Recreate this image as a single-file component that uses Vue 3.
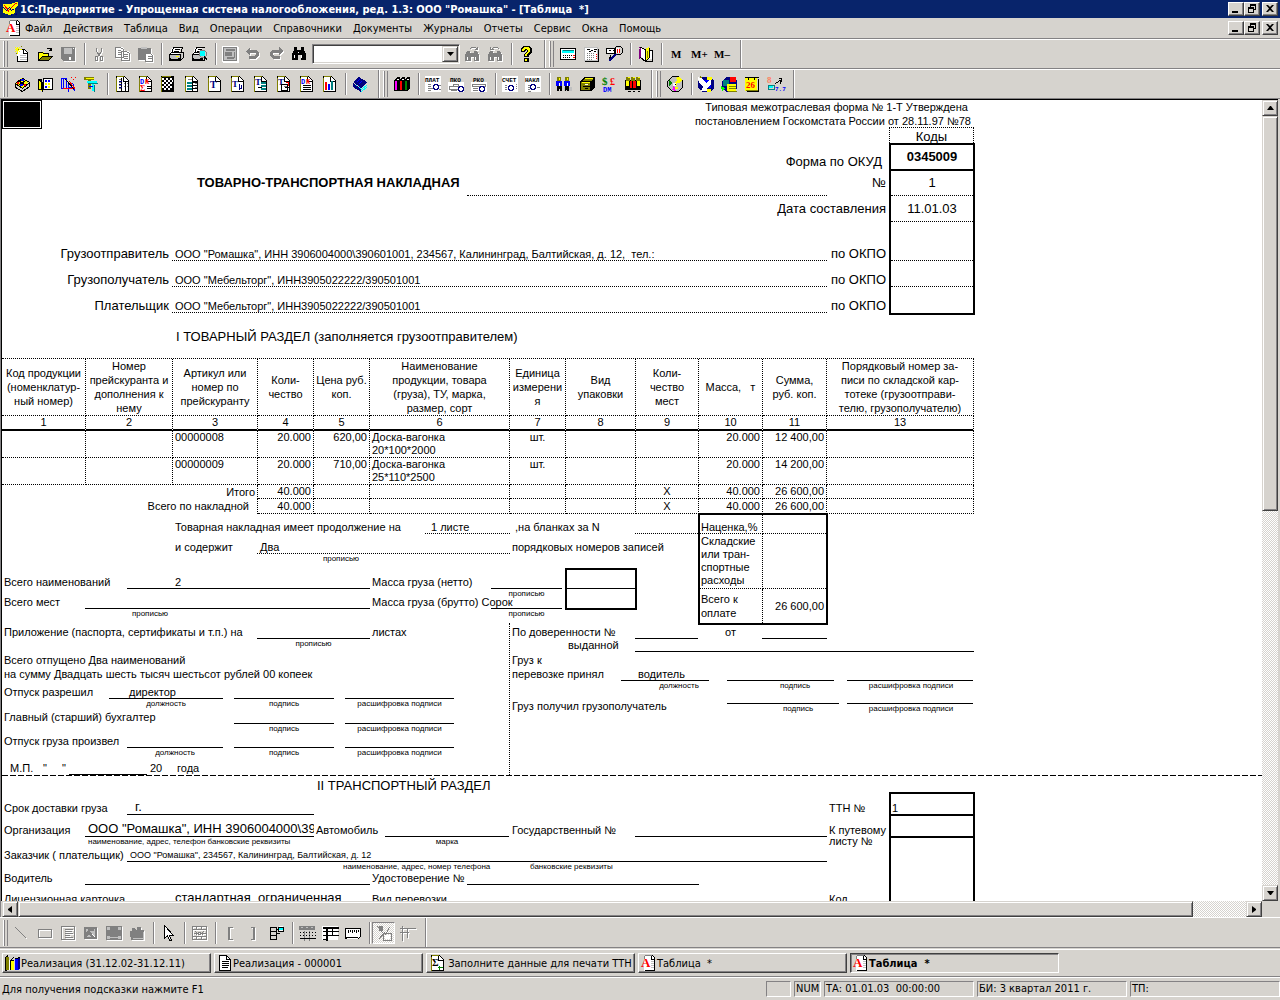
<script setup>
import { h } from 'vue'

const palette = {
  k: '#000000', w: '#ffffff', g: '#808080', l: '#c0c0c0', y: '#ffff00', o: '#808000',
  b: '#000080', B: '#0000ff', c: '#00ffff', t: '#008080', r: '#ff0000', R: '#800000',
  m: '#ff00ff', G: '#008000', L: '#00ff00', p: '#800080', n: '#ff8060',
}

const page = 'fw M2 1h8l4 4v11H2z|sk M2 0h8l4 4v11H2zM9 0v5h5|so M2 1v14M2 0h7'

/* Layers: f = fill, s = 1px stroke, t = short label (x y size text) */
const icons = {
  app: 'fy M1 3h8l5-2h2v4l-3 2v5l-5 2-7-2z|sr M2 4l4 5 3-3 4-4M4 9l3 1M12 3l3-2|sb M1 6l3 3 3-3 2 3 3-2M9 14v-2M13 14l1-2',
  sheet: 'fw M3 1h8l3 3v12H3V1z|sg M3 0h8M3 0v3|sk M11 0l2 2v13H3M10 0v4h3|sl M9 6h3M9 8h3M9 10h3M9 12h3|tr 0 12 13 A',
  fresh: 'fw M3 4h7l3 3v9H3z|sk M7 3h3l3 3v9H3V9M9 3v4h4|sl M5 9h6M5 11h7M5 13h7|sy M0 3h7M3 0v7M1 1l5 5M5 1l-5 5|so M3 3h1M1 7h1M6 0h1',
  open: 'fy M1 6h5l1 1h5v3H6l-4 5H1z|fo M2 15l4-5h10l-4 5z|sk M1 14V6h4l1 1h5v3M1 14l4-4h10l-4 4zM9 3l1-1h3l1 2M14 1v3h-3',
  save: 'fg M1 1h14v14H3l-2-2z|fl M4 2h8v6H4z|fw M9 11h2v3H9zM13 2h1v1h-1z',
  cut: 'sg M5 1v4l4 5M10 1v4L6 10M4 10h2v4H4zM9 10h2v4H9z',
  copy: 'fw M1 1h8v10H1zM7 5h8v9H7z|sg M1 1h5l3 2v8H1zM7 5h5l3 2v7H7zM3 4h3M3 6h4M3 8h3M9 8h4M9 10h4M9 12h4',
  paste: 'fg M1 2h13v12H1z|fl M4 1h6v2H4z|fw M8 7h6l2 2v7H8z|sg M8 7h5l2 2v6H8zM10 10h4M10 12h4',
  print: 'fw M4 2h9l-2 6H2z|fl M1 8h13v5H1z|fk M1 12h12v3H1z|sk M5 1h9l-2 6M5 1L3 7M6 3h5M5 5h5M1 8l2-2h12v5l-3 3H1zM1 8h11v6|sy M7 10h3|fl M3 12h7v1H3z',
  preview: 'fw M4 2h7l-1 6H2z|fl M1 8h11v5H1z|fk M1 12h11v3H1z|sk M5 1h8M5 1L3 7M6 3h4M5 5h4M1 8l2-2h10v8H1zM1 8h9|fc M9 5h5v5H9z|sg M9 4h4l2 2v3l-2 2h-3L8 9V5z|sk M13 11l3 3M13 10l3 3|fl M3 12h6v1H3z',
  area: 'fl M0 0h16v16H0z|sw M0 0h15v15H0z|sg M1 1h13v13H1z|fg M4 3h9v2H4zM3 6h7v4H3zM5 11h7v2H5zM12 6h1v6h-1z',
  undo: 'fg M1 5l4-4v3h6l3 2v4l-4 3H4v-3h5l2-1V7H5v3z',
  redo: 'fg M15 5l-4-4v3H5L2 6v4l4 3h6v-3H7L5 9V7h6v3z',
  find: 'fk M3 1h3v3h4V1h3v3l2 4v6h-5V9H7v5H1V8l2-4z|sw M3 8v3M10 8v3M7 5v1|sk M4 2v1',
  findNext: 'fg M3 5h3v2h4V5h3l2 4v6h-5v-4H7v4H1V9z|sg M5 3l2-2h4l2 2M13 0v3h-3|sw M3 10v3M11 10v3',
  findPrev: 'fg M3 5h3v2h4V5h3l2 4v6h-5v-4H7v4H1V9z|sg M4 3l2-2h4l2 2M3 0v3h3|sw M3 10v3M11 10v3',
  help: 'fk M3 2l2-2h6l3 3v3l-3 3v2H6V8l3-3-1-1-1 2H3zM6 12h5v4H6z|fy M4 3l2-2h4l2 2v2l-3 3v2H7V8l3-3-1-2H7L6 5H4zM7 13h2v2H7z',
  calcBig: 'fw M0 2h16v12H0z|sk M0 2h15v11H0z|fc M2 4h12v3H2z|st M2 4h11|sk M2 9h1M4 9h1M6 9h1M8 9h1M10 9h1M2 11h1M4 11h1M6 11h1M8 11h1|sr M12 9h2M12 11h2',
  calcPage: 'fw M1 1h14v14H1z|sl M1 1h13v13H1z|sk M3 3h3M7 4h2M10 3h3M5 5h2M10 5h2M1 15h14M15 2v13|sg M3 7h1M5 7h1M7 7h1M9 7h1M3 9h1M5 9h1M7 9h1M9 9h1M3 11h1M5 11h1M7 11h1M9 11h1M3 13h1M5 13h1M7 13h1|sr M12 8h1M12 10h1M12 12h1',
  inspect: 'fw M0 2h13v5H0z|sk M0 2h9v5H0zM2 4h2M6 4h1M10 0h4l2 2v4l-2 2h-4L8 6V2z|sr M11 2v4M13 2v4|fb M8 8h3l-6 7H3v-2z|sk M4 9l-1 4',
  book: 'fw M4 2l4 1v11l-4-3z|fy M8 3l4-2v10l-4 4z|fw M12 4h3v9h-3z|sp M1 1h2v10l5 4|sk M3 1l5 2v11M12 1v10l-4 4M3 11l5 4h7V4h-3|sp M2 2v10|so M10 4v7',
  M: 'tk 3 12 11 M', Mp: 'tk 0 12 11 M+', Mm: 'tk 0 12 11 M–',
  cube: 'fy M1 7l7-5 7 4-7 6z|sk M1 7l7-5 7 4-7 6zM1 7v4l7 4 7-5V6M4 4l7 5M11 4L4 9|fr M3 6h2v2H3zM10 8h2v2h-2z|fB M7 3h3v2H7zM6 8h3v2H6z',
  accounts: 'fy M1 4l4 2v9l-4-3z|sk M1 3h3v10H1zM1 3l4 3v9|fw M6 2h10v12H6z|sk M6 2h9v11H6z|fB M8 4h2v2H8zM11 4h2v2h-2zM8 10h2v2H8z|fy M8 7h2v2H8zM11 7h2v2h-2zM11 10h2v2h-2z',
  wizard: 'sB M1 2h5v10H1zM3 2v10M8 7v8M8 7h4l2 3M8 11h4l3 4|sr M9 5l6 8M2 12h12M12 3h1M14 1h1M10 1h1|sk M5 3l9 10',
  tee: 'fo M1 1h10v3H8v9H5V4H1z|sy M2 2h8|fc M4 5h10v2h-3v8H9V7H4z|st M4 7h10M11 8v7|sB M5 10h4',
  docJournal: page + '|sg M4 3h3M4 6h3M4 9h3M4 12h3M9 7h1M9 10h1M12 7h1M12 10h1|sk M7 1v14M11 5v10|sb M4 5h3M4 8h3M4 11h3',
  docSum: page + '|tB 3 8 7 D|tr 8 8 7 K|tr 3 15 8 Σ|sk M9 10h4M9 12h4',
  chess: 'fk M1 0h13v16H1z|fw M2 2h2v2H2zM6 2h2v2H6zM10 2h2v2h-2zM4 4h2v2H4zM8 4h2v2H8zM12 4h1v2h-1zM2 6h2v2H2zM6 6h2v2H6zM10 6h2v2h-2zM4 8h2v2H4zM8 8h2v2H8zM2 10h2v2H2zM6 10h2v2H6zM10 10h2v2h-2zM4 12h2v2H4zM8 12h2v2H8z|so M1 0h9M1 0v15',
  docTree: page + '|ft M4 6h5v2H4zM4 9h5v2H4zM4 12h5v2H4z|sk M9 2v13M9 6h5M9 9h5M9 12h5|sg M4 3h4M11 7h2M11 11h2',
  docT: page + '|tb 4 12 10 T',
  docT2: page + '|tb 3 11 9 T|sb M10 7v6M9 12h3M12 8v4',
  docT3: page + '|tb 3 9 9 T|ft M9 6h5v2H9zM9 9h5v2H9zM9 12h5v2H9z|sk M5 11h4',
  docT4: page + '|tb 3 9 9 T|sk M6 8h6v6H6zM9 11h4|sr M10 6h3v3|sg M8 10h3',
  docLines: page + '|tB 3 8 7 D|tr 8 8 7 K|sk M4 9h8M4 11h8M4 13h8',
  chart: page + '|fr M4 6h2v8H4z|fB M7 8h2v6H7z|ft M10 5h2v9h-2z',
  blueBook: 'fb M1 6l6-5 8 5-6 6z|sc M2 8l7 5 6-5M2 10l7 5 6-5|fb M1 7l8 6v3l-8-5z|sB M4 6l3-3M9 5l-3 3',
  library: 'fk M0 4l3-3h3l-1 14H0z|fm M1 5h2v9H1z|fk M5 4l3-3h3v14H5z|fr M6 5h2v9H6z|fk M10 4l3-3h3v11l-3 3h-3z|fG M11 5h2v9h-2z|sw M2 3h2M7 3h2M12 3h2',
  plat: 'fw M0 0h16v16H0z|tk 0 6 6 ПЛАТ|sg M2 8h3M2 10h3M2 12h5M2 14h3M13 9h2M13 13h2|sb M9 8h3v1h1v3h-1v1H9v-1H8V9h1z',
  pko: 'fw M0 6h16v10H0z|tk 2 6 6 ПКО|sg M5 8h5v2H5zM1 10h9v3H1zM2 14h6|sb M11 10h3v1h1v3h-1v1h-3v-1h-1v-3h1z',
  rko: 'fw M0 6h16v10H0z|tk 2 6 6 РКО|sg M1 8h13v2H1zM1 12h5M1 14h5|sb M9 10h3v1h1v3h-1v1H9v-1H8v-3h1z',
  bill: 'fw M0 0h16v16H0z|tk 0 6 6 СЧЕТ|sg M2 9h2M2 11h2M2 13h2M13 8h1M13 10h1M13 12h1|sb M7 9h3v1h1v3h-1v1H7v-1H6v-3h1z',
  nakl: 'fw M0 0h16v16H0z|tk 0 6 6 НАКЛ|sg M2 9h2M2 11h2M2 13h2M11 11h3M2 15h3|sb M6 8h3v1h1v3H9v1H6v-1H5V9h1z',
  people: 'fl M8 11h8v4H8z|fo M1 1h4v4H1zM9 1h4v4H9z|fB M0 5h6v5H0zM8 5h6v5H8z|fk M1 10h5v5H4v-3l-1 3H1zM9 10h4v5h-2l-1-3v3H9z|sw M3 6v3M11 6v3|sy M3 1v2M11 1v2',
  cabinet: 'fk M1 5l5-4h10v10l-4 4H1z|fo M2 6h9v8H2zM5 3h9l-2 2H4z|sy M2 6h8M5 2h8|sw M5 8h3|sk M3 10h8M5 12h3',
  currency: 'tG 0 9 11 $|tr 8 9 10 £|tB 1 16 7 DM',
  crowd: 'fk M0 4h16v10H0z|fo M1 1h4v4H1zM6 1h4v4H6zM11 1h4v4h-4z|fy M1 5h3v5H1zM12 5h3v5h-3z|fr M5 5h2v7H5zM8 5h3v7H8z|sk M2 15h3M7 15h2M12 15h2M4 6v6M7 5v8M11 5v8|sy M2 1h2M7 1h2M12 1h2',
  disc: 'fk M5 0h6l5 5v6l-5 5H5l-5-5V5z|fl M5 1h6l4 4v6l-4 4H5l-4-4V5z|fG M2 4l4 3-4 3z|fm M5 14l2-5 2 6z|fy M8 2l4-1 3 3-3 3h-2v3H8V6l2-2zM8 11h3v2H8z|fw M6 7h3v3H6z|sk M7 8h1',
  globe: 'fb M4 1h8l4 4v7l-4 4H4l-4-4V5z|fB M5 4h8v8H5z|fw M0 1l5 2 3 4 5-5v6l-5 5 3 2H3l2-4-4-4z|fy M9 1h5v3H9zM9 13h4v3H9z|fo M2 0l3 2H2z',
  globeDoc: 'fb M5 1h7l4 4v7l-4 4H5l-4-4V5z|ft M2 4h6v6H2z|fr M9 1h6v5H9z|fy M6 8h9v7H6z|so M7 10h7M7 12h7M6 15h9|fL M0 10l4 2-3 3z',
  diary: 'fy M1 1h12v14H1z|sk M0 1h14M14 2v13H2M4 0v3M10 0v3|tr 2 12 9 26|so M1 14h12',
  convert: 'tn 0 7 9 8|sk M8 7l6-4M11 2h3v3M13 3v4|st M1 9h6v4H1z|fc M2 10h4v2H2z|tB 8 15 6 7.7',
  line: 'sg M1 2l11 11', rect: 'sg M1 4h13v8H1z',
  textBox: 'sg M1 1h13v13H1zM4 4h8M4 6h7M4 8h8M4 10h5M4 12h8',
  picture: 'fg M1 2h13v12H1z|fl M3 4h9v8H3z|fg M5 3h6v3H5zM2 8l4-3 7 8H9L6 9l-3 4z|sw M9 9l3 3',
  ole: 'fg M0 1h16v14H0z|fl M1 2h3v3H1zM12 2h3v3h-3zM1 11h3v3H1zM12 11h3v3h-3z|fg M3 7l5-6 5 6-3 5H6z|sl M2 12h12',
  frame: 'fg M1 6h2V3h3l1 2h1V2h4v3h3v10H2v-3H1z|sl M3 13h11M14 6v8|sg M7 7h2',
  cursor: 'fw M4 1l9 9h-4l2 4-2 1-2-4-3 3z|sk M4 0v13l3-3 2 5h2l-2-5h4z',
  merge: 'sg M1 1h14v13H1zM1 4h14M1 11h14M5 1v3M10 1v3M5 11v3M10 11v3M2 8h4M10 8h4M4 6l2 2-2 2M12 6l-2 2 2 2|sg M7 7h2v2H7z',
  brOpen: 'sg M10 2H6v12h4M7 2v12', brClose: 'sg M5 2h4v12H5M8 2v12',
  section: 'sk M2 2h6v4H2zM2 6h6v4H2zM2 10h6v4H2zM8 4h4M8 8h3|fw M11 1h4v6h-4z|sk M10 2h5v4h-5z|fc M11 3h4v2h-4z',
  header: 'fg M0 1h16v4H0z|sg M5 5v10M10 5v10|fl M2 2h2v1H2zM7 2h2v1H7zM12 2h2v1h-2z|sk M0 7h1M3 7h1M6 7h1M9 7h1M12 7h1M15 7h1M0 10h1M3 10h1M6 10h1M9 10h1M12 10h1M15 10h1M0 13h16',
  grid: 'fw M0 1h16v14H0z|sk M0 2h16M0 6h16M0 10h16M0 14h5M5 1v14M10 2v8M0 3h16M4 1v14',
  ruler: 'fw M0 3h16v8l-2 3H1l-1-3z|sk M0 3h15v8l-2 2-1-1H2l-2 1zM3 4v3M5 4v2M7 4v3M9 4v2M11 4v3M13 4v2',
  edit: 'sg M1 1l5 6 3 2 4-7M2 14l6-7M4 2l3 4|fg M3 1h4v5H3z|sg M7 8h8v7H7z|fw M9 10h5v4H9z',
  lines: 'sg M0 3h16M3 0v15M0 7h9M8 3v9',
  journal: 'fk M0 2l3-2v15l-2 1H0z|fo M1 2h3v13H1z|fk M5 5h4v10H5z|fy M6 6h3v9H6z|fB M10 3h4v12h-4z|fb M13 2h2v12h-2z|sk M9 3h3l3-2M5 5l3-3|sw M4 4v10',
  paper: 'fw M2 1h8l4 4v11H2z|sk M2 0h7l4 4v11H2zM9 0v4h4M4 6h7M4 8h7M4 10h7M4 12h6',
  report: page + '|tk 3 11 10 Σ|sG M10 10v4M8 12h5',
}

const Icon = (props) =>
  h(
    'svg',
    { class: 'icon', width: 16, height: 16, viewBox: '0 0 16 16', 'aria-hidden': 'true' },
    icons[props.name].split('|').map((layer) => {
      const color = palette[layer[1]]
      const body = layer.slice(3)
      if (layer[0] === 't') {
        const [x, y, size, label] = body.split(' ')
        return h('text', { x, y, fill: color, 'font-size': size, class: +size < 8 ? 'tiny' : 'serif' }, label)
      }
      return layer[0] === 'f'
        ? h('path', { d: body, fill: color })
        : h('path', { d: body, fill: 'none', stroke: color, transform: 'translate(.5 .5)' })
    }),
  )
Icon.props = ['name']

/* Lines of the form: [height, [left edge, right edge, text, classes], ...] */
const Lines = (props) =>
  props.rows.map(([height, ...cells]) => {
    let edge = props.from
    return h(
      'div',
      { class: 'line', style: { height: height + 'px' } },
      cells.map(([left, right, text, cls]) => {
        const style = { marginLeft: left - edge + 'px', width: right - left + 'px' }
        edge = right
        return h('div', { class: ['cell', cls], style }, text)
      }),
    )
  })
Lines.props = ['rows', 'from']

const menu = ['Файл', 'Действия', 'Таблица', 'Вид', 'Операции', 'Справочники', 'Документы', 'Журналы', 'Отчеты', 'Сервис', 'Окна', 'Помощь']

/* '-' is a separator, '*' a drop-down; a leading '!' marks a disabled tool */
const bandsTop = [
  ['fresh', 'open', '!save', '-', '!cut', '!copy', '!paste', '-', 'print', 'preview', '-', '!area', '!undo', '!redo', 'find', '*', '!findNext', '!findPrev', '-', 'help'],
  ['calcBig', 'calcPage', 'inspect', '-', 'book', '-', 'M', 'Mp', 'Mm'],
]
const bandsMiddle = [
  ['cube', 'accounts', 'wizard', 'tee', '-', 'docJournal', 'docSum', 'chess', 'docTree', 'docT', 'docT2', 'docT3', 'docT4', 'docLines', 'chart', '-', 'blueBook'],
  ['library', '-', 'plat', 'pko', 'rko', '-', 'bill', 'nakl', '-', 'people', 'cabinet', 'currency', 'crowd'],
  ['disc', '-', 'globe', 'globeDoc', 'diary', 'convert'],
]
const bandsBottom = [
  ['!line', '!rect', '!textBox', '!picture', '!ole', '!frame', '-', 'cursor', '-', '!merge', '-', '!brOpen', '!brClose', 'section', '-', 'header', 'grid', 'ruler', '-', '+edit', '!lines'],
]
const toolName = (tool) => tool.replace(/^[!+]/, '')

const parties = [
  [15],
  [26, [702, 882, 'Форма по ОКУД', 'big right']],
  [27, [197, 456, 'ТОВАРНО-ТРАНСПОРТНАЯ НАКЛАДНАЯ', 'big bold up'], [467, 827, '', 'dots'], [840, 886, '№', 'big right up']],
  [26, [702, 886, 'Дата составления', 'big right up']],
  [39, [2, 169, 'Грузоотправитель', 'big right'], [172, 827, 'ООО "Ромашка", ИНН 3906004000\\390601001, 234567, Калининград, Балтийская, д. 12,  тел.:', 'dots pad'], [827, 886, 'по ОКПО', 'big right']],
  [26, [2, 169, 'Грузополучатель', 'big right'], [172, 827, 'ООО "Мебельторг", ИНН3905022222/390501001', 'dots pad'], [827, 886, 'по ОКПО', 'big right']],
  [26, [2, 169, 'Плательщик', 'big right'], [172, 827, 'ООО "Мебельторг", ИНН3905022222/390501001', 'dots pad'], [827, 886, 'по ОКПО', 'big right']],
]

const columns = [84, 87, 85, 56, 56, 140, 56, 70, 63, 64, 64, 147]
const heads = [
  'Код продукции\n(номенклатур-\nный номер)', 'Номер\nпрейскуранта и\nдополнения к\nнему', 'Артикул или\nномер по\nпрейскуранту',
  'Коли-\nчество', 'Цена руб.\nкоп.', 'Наименование\nпродукции, товара\n(груза), ТУ, марка,\nразмер, сорт', 'Единица\nизмерени\nя',
  'Вид\nупаковки', 'Коли-\nчество\nмест', 'Масса,   т', 'Сумма,\nруб. коп.',
  'Порядковый номер за-\nписи по складской кар-\nтотеке (грузоотправи-\nтелю, грузополучателю)',
]
const numbers = [1, 2, 3, 4, 5, 6, 7, 8, 9, 10, 11, 13]
const goods = [
  ['', '', '00000008', '20.000', '620,00', 'Доска-вагонка\n20*100*2000', 'шт.', '', '', '20.000', '12 400,00', ''],
  ['', '', '00000009', '20.000', '710,00', 'Доска-вагонка\n25*110*2500', 'шт.', '', '', '20.000', '14 200,00', ''],
]
const align = ['', '', 'left', 'right', 'right', 'left', '', '', '', 'right', 'right', '']
const totals = [
  ['Итого', '40.000', '', '', '', '', 'X', '40.000', '26 600,00', ''],
  ['Всего по накладной', '40.000', '', '', '', '', 'X', '40.000', '26 600,00', ''],
]
const totalAlign = ['right', 'right', '', '', '', '', '', 'right', 'right', '']

const continuation = [
  [20, [175, 425, 'Товарная накладная имеет продолжение на'], [425, 510, '1 листе', 'dots pad2'], [515, 635, ',на бланках за N'], [635, 698, '', 'dots']],
  [20, [175, 257, 'и содержит'], [257, 510, 'Два', 'dots pad'], [512, 690, 'порядковых номеров записей']],
  [14, [313, 369, 'прописью', 'note mid']],
]
const weights = [
  [21, [4, 127, 'Всего наименований'], [127, 370, '2', 'rule mid2'], [372, 491, 'Масса груза (нетто)'], [491, 562, '', 'rule']],
  [20, [4, 85, 'Всего мест'], [85, 370, '', 'rule'], [372, 491, 'Масса груза (брутто) Сорок'], [491, 562, 'прописью', 'rule note mid top']],
  [11, [85, 215, 'прописью', 'note mid'], [491, 562, 'прописью', 'note mid']],
]
const release = [
  [19, [4, 257, 'Приложение (паспорта, сертификаты и т.п.) на'], [257, 370, '', 'rule'], [372, 420, 'листах']],
  [14, [257, 370, 'прописью', 'note mid']],
  [14, [4, 370, 'Всего отпущено Два наименований']],
  [14, [4, 370, 'на сумму Двадцать шесть тысяч шестьсот рублей 00 копеек']],
  [18, [4, 109, 'Отпуск разрешил'], [109, 223, 'директор', 'rule pad20'], [234, 334, '', 'rule'], [345, 454, '', 'rule']],
  [10, [109, 223, 'должность', 'note mid'], [234, 334, 'подпись', 'note mid'], [345, 454, 'расшифровка подписи', 'note mid']],
  [15, [4, 200, 'Главный (старший) бухгалтер'], [234, 334, '', 'rule'], [345, 454, '', 'rule']],
  [10, [234, 334, 'подпись', 'note mid'], [345, 454, 'расшифровка подписи', 'note mid']],
  [14, [4, 127, 'Отпуск груза произвел'], [127, 223, '', 'rule'], [234, 334, '', 'rule'], [345, 454, '', 'rule']],
  [10, [127, 223, 'должность', 'note mid'], [234, 334, 'подпись', 'note mid'], [345, 454, 'расшифровка подписи', 'note mid']],
  [17, [10, 43, 'М.П.'], [43, 62, '"'], [62, 69, '"'], [69, 147, '', 'rule'], [150, 177, '20'], [177, 220, 'года']],
]
const acceptance = [
  [16, [512, 635, 'По доверенности №'], [635, 698, '', 'rule'], [725, 762, 'от'], [762, 827, '', 'rule']],
  [13, [568, 635, 'выданной'], [635, 974, '', 'rule']],
  [15, [512, 635, 'Груз к']],
  [14, [512, 621, 'перевозке принял'], [621, 709, 'водитель', 'rule pad17'], [727, 834, '', 'rule'], [847, 973, '', 'rule']],
  [12, [635, 723, 'должность', 'note mid'], [741, 849, 'подпись', 'note mid'], [849, 973, 'расшифровка подписи', 'note mid']],
  [11, [727, 839, '', 'rule'], [847, 973, '', 'rule']],
  [9, [512, 727, 'Груз получил грузополучатель'], [741, 855, 'подпись', 'note mid'], [855, 967, 'расшифровка подписи', 'note mid']],
]
const transport = [
  [18, [317, 600, 'II ТРАНСПОРТНЫЙ РАЗДЕЛ', 'big']],
  [21, [4, 127, 'Срок доставки груза'], [127, 314, 'г.', 'rule big pad8'], [829, 889, 'ТТН №']],
  [22, [4, 85, 'Организация'], [85, 314, 'ООО "Ромашка", ИНН 3906004000\\390601001', 'rule big pad clip'], [316, 385, 'Автомобиль'], [385, 509, '', 'rule'], [512, 635, 'Государственный №'], [635, 827, '', 'rule'], [829, 889, 'К путевому']],
  [11, [88, 385, 'наименование, адрес, телефон банковские реквизиты', 'note'], [385, 509, 'марка', 'note mid'], [829, 889, 'листу №']],
  [14, [4, 127, 'Заказчик ( плательщик)'], [127, 827, 'ООО "Ромашка", 234567, Калининград, Балтийская, д. 12', 'rule small pad']],
  [10, [343, 530, 'наименование, адрес, номер телефона', 'note'], [530, 640, 'банковские реквизиты', 'note']],
  [13, [4, 85, 'Водитель'], [85, 370, '', 'rule'], [372, 467, 'Удостоверение №'], [467, 699, '', 'rule']],
  [21, [4, 175, 'Лицензионная карточка'], [175, 372, 'стандартная  ограниченная', 'big'], [372, 600, 'Вид перевозки'], [829, 889, 'Код']],
]

const windows = [
  { icon: 'journal', title: 'Реализация (31.12.02-31.12.11)' },
  { icon: 'paper', title: 'Реализация - 000001' },
  { icon: 'report', title: ' Заполните данные для печати ТТН' },
  { icon: 'sheet', title: 'Таблица  *' },
  { icon: 'sheet', title: 'Таблица  *', active: true },
]
</script>

<template>
  <div class="app">
    <header class="title-bar">
      <Icon name="app" />
      <h1>1С:Предприятие - Упрощенная система налогообложения, ред. 1.3: ООО "Ромашка" - [Таблица&nbsp; *]</h1>
      <div class="controls">
        <button aria-label="Свернуть"><svg width="12" height="10" viewBox="0 0 12 10"><path d="M2 7h6v2H2z" /></svg></button>
        <button aria-label="Восстановить"><svg width="12" height="10" viewBox="0 0 12 10"><path d="M4 0h6v6H8V5h1V2H5v1H4zM2 3h6v6H2zM3 5v3h4V5z" fill-rule="evenodd" /></svg></button>
        <button aria-label="Закрыть" class="close"><svg width="12" height="10" viewBox="0 0 12 10"><path d="M2 1h2l2 2 2-2h2L7 4.500l3 3.500H8L6 6 4 8H2l3-3.500z" /></svg></button>
      </div>
    </header>

    <nav class="menu-bar">
      <Icon name="sheet" />
      <button v-for="item in menu" :key="item">{{ item }}</button>
      <div class="controls">
        <button aria-label="Свернуть окно"><svg width="12" height="10" viewBox="0 0 12 10"><path d="M2 7h6v2H2z" /></svg></button>
        <button aria-label="Восстановить окно"><svg width="12" height="10" viewBox="0 0 12 10"><path d="M4 0h6v6H8V5h1V2H5v1H4zM2 3h6v6H2zM3 5v3h4V5z" fill-rule="evenodd" /></svg></button>
        <button aria-label="Закрыть окно" class="close"><svg width="12" height="10" viewBox="0 0 12 10"><path d="M2 1h2l2 2 2-2h2L7 4.500l3 3.500H8L6 6 4 8H2l3-3.500z" /></svg></button>
      </div>
    </nav>

    <div v-for="(bands, i) in [bandsTop, bandsMiddle]" :key="i" class="toolbar">
      <div v-for="(band, b) in bands" :key="b" class="band">
        <span class="grip"></span>
        <template v-for="(tool, n) in band" :key="n">
          <span v-if="tool === '-'" class="sep"></span>
          <label v-else-if="tool === '*'" class="combo">
            <select aria-label="Строка поиска"><option></option></select>
            <span class="drop"><svg width="7" height="4" viewBox="0 0 7 4"><path d="M0 0h7L3.500 4z" /></svg></span>
          </label>
          <button v-else :class="['tool', { off: tool[0] === '!' }]" :aria-label="toolName(tool)"><Icon :name="toolName(tool)" /></button>
        </template>
      </div>
    </div>

    <main class="view">
      <div class="view-row">
        <div class="sheet">
          <div class="form-head">
            <div class="selected"></div>
            <p>Типовая межотраслевая форма № 1-Т Утверждена&nbsp;<br />постановлением Госкомстата России от 28.11.97 №78</p>
          </div>
          <div class="split">
            <div class="parties"><Lines :rows="parties" :from="2" /></div>
            <div class="codes">
              <div class="codes-title">Коды</div>
              <div class="codes-box">
                <div class="code okud">0345009</div>
                <div class="code number">1</div>
                <div class="code">11.01.03</div>
                <div class="code tall"></div>
                <div class="code"></div>
                <div class="code last"></div>
              </div>
            </div>
          </div>
          <h2>I ТОВАРНЫЙ РАЗДЕЛ (заполняется грузоотправителем)</h2>

          <table class="goods">
            <colgroup><col v-for="(w, i) in columns" :key="i" :style="{ width: w + 'px' }" /></colgroup>
            <thead>
              <tr class="heads"><th v-for="head in heads" :key="head">{{ head }}</th></tr>
              <tr class="numbers"><th v-for="n in numbers" :key="n">{{ n }}</th></tr>
            </thead>
            <tbody>
              <tr v-for="(row, r) in goods" :key="r" class="item">
                <td v-for="(value, c) in row" :key="c" :class="align[c]">{{ value }}</td>
              </tr>
              <tr v-for="(row, r) in totals" :key="'t' + r" class="total">
                <td v-for="(value, c) in row" :key="c" :class="totalAlign[c]" :colspan="c === 0 ? 3 : 1">{{ value }}</td>
              </tr>
            </tbody>
          </table>

          <div class="split summary">
            <div class="summary-text">
              <Lines :rows="continuation" :from="2" />
              <div class="split">
                <div class="weights"><Lines :rows="weights" :from="2" /></div>
                <div class="weight-box"><div></div><div></div></div>
              </div>
            </div>
            <table class="markup">
              <tbody>
                <tr class="m1"><th>Наценка,%</th><td></td></tr>
                <tr class="m2"><th>Складские<br />или тран-<br />спортные<br />расходы</th><td></td></tr>
                <tr class="m3"><th>Всего к<br />оплате</th><td>26 600,00</td></tr>
              </tbody>
            </table>
          </div>

          <div class="split signatures">
            <div class="release"><Lines :rows="release" :from="2" /></div>
            <div class="acceptance"><Lines :rows="acceptance" :from="510" /></div>
          </div>
          <div class="page-break"></div>

          <div class="split">
            <div class="transport"><Lines :rows="transport" :from="2" /></div>
            <div class="way-codes"><div>1</div><div></div><div class="rest"></div></div>
          </div>
        </div>
        <div class="bar vertical">
          <span class="knob"><svg width="7" height="4" viewBox="0 0 7 4"><path d="M3 0h1l3 4H0z" /></svg></span>
          <span class="thumb"></span>
          <span class="track"></span>
          <span class="knob"><svg width="7" height="4" viewBox="0 0 7 4"><path d="M0 0h7L4 4H3z" /></svg></span>
        </div>
      </div>
      <div class="bar horizontal">
        <span class="knob"><svg width="4" height="7" viewBox="0 0 4 7"><path d="M4 0v7L0 4V3z" /></svg></span>
        <span class="thumb"></span>
        <span class="track"></span>
        <span class="knob"><svg width="4" height="7" viewBox="0 0 4 7"><path d="M0 0v7l4-3V3z" /></svg></span>
      </div>
    </main>

    <div class="toolbar bottom">
      <div v-for="(band, b) in bandsBottom" :key="b" class="band">
        <span class="grip"></span>
        <template v-for="(tool, n) in band" :key="n">
          <span v-if="tool === '-'" class="sep"></span>
          <button v-else :class="['tool', { off: tool[0] === '!', pressed: tool[0] === '+' }]" :aria-label="toolName(tool)"><Icon :name="toolName(tool)" /></button>
        </template>
      </div>
    </div>

    <nav class="windows">
      <button v-for="(win, i) in windows" :key="i" :class="{ active: win.active }"><Icon :name="win.icon" /><span>{{ win.title }}</span></button>
    </nav>

    <footer class="status">
      <span class="hint">Для получения подсказки нажмите F1</span>
      <span class="field w1"></span>
      <span class="field w2">NUM</span>
      <span class="field w3">ТА: 01.01.03&nbsp; 00:00:00</span>
      <span class="field w3">БИ: 3 квартал 2011 г.</span>
      <span class="field w3">ТП:</span>
    </footer>
  </div>
</template>

<style>
body {
  margin: 0;
}
.icon {
  display: block;
  flex: none;
  shape-rendering: crispEdges;
  overflow: visible;
}
.icon text {
  font-family: "Liberation Serif", serif;
  font-weight: bold;
}
.icon text.tiny {
  font-family: "Liberation Mono", monospace;
}
.line {
  display: flex;
  align-items: stretch;
}
.line .cell {
  flex: none;
  box-sizing: border-box;
  display: flex;
  align-items: flex-end;
  white-space: pre;
  line-height: 12px;
  border-bottom: 1px solid transparent;
}
.line .big {
  font-size: 13px;
  line-height: 14px;
}
.line .small {
  font-size: 9px;
  line-height: 11px;
}
.line .note {
  font-size: 8px;
  line-height: 9px;
  align-items: flex-start;
}
.line .bold {
  font-weight: bold;
}
.line .right {
  justify-content: flex-end;
  line-height: 12px;
}
.line .up {
  line-height: 14px;
  padding-bottom: 5px;
}
.line .mid {
  justify-content: center;
}
.line .dots {
  border-bottom: 1px dotted #000;
}
.line .rule {
  border-bottom: 1px solid #000;
}
.line .pad {
  padding-left: 3px;
}
.line .pad2 {
  padding-left: 6px;
}
.line .pad8 {
  padding-left: 8px;
}
.line .pad17 {
  padding-left: 17px;
}
.line .pad20 {
  padding-left: 20px;
}
.line .mid2 {
  padding-left: 48px;
}
.line .clip {
  overflow: hidden;
}
</style>

<style scoped>
.app {
  height: 100vh;
  display: flex;
  flex-direction: column;
  background: #d6d3ce;
  color: #000;
  font: 11px/13px "DejaVu Sans Condensed", "DejaVu Sans", sans-serif;
  overflow: hidden;
}
button {
  font: inherit;
  color: inherit;
  background: none;
  border: 0;
  padding: 0;
  margin: 0;
}
.title-bar {
  flex: none;
  height: 18px;
  display: flex;
  align-items: center;
  background: #08246b;
  color: #fff;
  padding: 0 2px;
}
.title-bar h1 {
  margin: 0 0 0 2px;
  font-size: 11px;
  font-weight: bold;
  flex: 1;
  white-space: nowrap;
}
.controls {
  display: flex;
  margin-left: auto;
}
.controls button {
  box-sizing: border-box;
  width: 16px;
  height: 14px;
  background: #d6d3ce;
  border: 1px solid;
  border-color: #fff #404040 #404040 #fff;
  box-shadow: inset -1px -1px #848284;
  display: flex;
  justify-content: center;
  align-items: center;
}
.controls .close {
  margin-left: 2px;
}
.controls svg {
  display: block;
}
.menu-bar {
  flex: none;
  height: 20px;
  display: flex;
  align-items: center;
  gap: 11px;
  padding: 0 2px 0 6px;
  border-bottom: 1px solid #848284;
}
.menu-bar > .icon {
  margin-right: -8px;
}
.toolbar {
  flex: none;
  box-sizing: border-box;
  height: 30px;
  display: flex;
  border-top: 1px solid #fff;
  border-bottom: 1px solid #848284;
}
.toolbar + .toolbar {
  height: 29px;
  border-bottom: 0;
}
.band {
  display: flex;
  align-items: center;
  padding: 0 7px 0 3px;
  border-right: 1px solid #848284;
  box-shadow: 1px 0 #fff;
  margin-right: 1px;
}
.grip {
  box-sizing: border-box;
  width: 7px;
  height: 26px;
  border: solid;
  border-width: 0 3px 0 3px;
  border-color: transparent;
  border-left: 1px solid #fff;
  box-shadow: inset 1px 0 #848284, inset -3px 0 #d6d3ce;
  background: linear-gradient(90deg, transparent 3px, #fff 3px, #fff 4px, #848284 4px, #848284 5px, transparent 5px) border-box;
}
.sep {
  box-sizing: border-box;
  width: 3px;
  height: 22px;
  margin-left: 5px;
  border-left: 1px solid #848284;
  box-shadow: inset 1px 0 #fff;
}
.tool {
  box-sizing: border-box;
  width: 23px;
  height: 22px;
  padding-left: 4px;
  display: flex;
  align-items: center;
}
.tool.off .icon {
  filter: drop-shadow(1px 1px 0 #fff);
}
.tool.pressed {
  padding-left: 3px;
  border: 1px solid;
  border-color: #848284 #fff #fff #848284;
  background: repeating-conic-gradient(#fff 0 25%, #d6d3ce 0 50%) 0 0 / 2px 2px;
}
.combo {
  box-sizing: border-box;
  display: flex;
  width: 148px;
  height: 20px;
  margin-left: 2px;
  padding: 1px;
  background: #fff;
  border: 1px solid;
  border-color: #848284 #fff #fff #848284;
  box-shadow: inset 1px 1px #404040, inset -1px -1px #d6d3ce;
}
.combo select {
  flex: 1;
  appearance: none;
  background: none;
  border: 0;
  min-width: 0;
}
.drop {
  display: flex;
  align-items: center;
  justify-content: center;
}
.drop,
.knob,
.thumb {
  box-sizing: border-box;
  background: #d6d3ce;
  border: 1px solid;
  border-color: #d6d3ce #404040 #404040 #d6d3ce;
  box-shadow: inset 1px 1px #fff, inset -1px -1px #848284;
}
.drop {
  width: 16px;
}
.view {
  flex: 1;
  min-height: 0;
  display: flex;
  flex-direction: column;
  border-top: 1px solid #848284;
  border-left: 1px solid #848284;
  padding-right: 2px;
}
.view-row {
  flex: 1;
  min-height: 0;
  display: flex;
}
.sheet {
  flex: 1;
  min-width: 0;
  background: #fff;
  border-top: 1px solid #000;
  border-left: 1px solid #000;
  overflow: hidden;
  font: 11px/14px "Liberation Sans", Arial, sans-serif;
}
.bar {
  flex: none;
  display: flex;
}
.bar.vertical {
  width: 16px;
  flex-direction: column;
  border-top: 1px solid #000;
}
.bar.horizontal {
  height: 16px;
  margin-right: 16px;
  padding-left: 1px;
}
.knob {
  width: 16px;
  height: 16px;
  flex: none;
  display: flex;
  align-items: center;
  justify-content: center;
}
.bar .track {
  background: repeating-conic-gradient(#fff 0 25%, #d6d3ce 0 50%) 0 0 / 2px 2px;
}
.vertical .thumb {
  flex: 395;
}
.vertical .track {
  flex: 375;
}
.horizontal .thumb {
  flex: 1175;
}
.horizontal .track {
  flex: 53;
}
.form-head {
  display: flex;
  justify-content: space-between;
  width: 969px;
  height: 28px;
}
.selected {
  box-sizing: border-box;
  width: 40px;
  height: 29px;
  background: #000;
  border: 1px solid #000;
  outline: 1px solid #fff;
  outline-offset: -2px;
}
.form-head p {
  margin: 0;
  text-align: right;
}
.split {
  display: flex;
}
.parties {
  width: 887px;
}
.codes {
  width: 86px;
  font-size: 13px;
  text-align: center;
}
.codes-title {
  box-sizing: border-box;
  height: 16px;
  margin: -1px 1px 0 0;
  border: 1px dotted #000;
  border-bottom: 0;
  line-height: 18px;
}
.codes-box {
  border: 2px solid #000;
}
.code {
  box-sizing: border-box;
  height: 26px;
  line-height: 25px;
  border-bottom: 1px dotted #000;
}
.code.okud {
  line-height: 23px;
  font-weight: bold;
  border-bottom: 2px solid #000;
}
.code.number {
  height: 25px;
  line-height: 24px;
}
.code.tall {
  height: 39px;
}
.code.last {
  border: 0;
}
.sheet h2 {
  margin: 14px 0 14px 174px;
  font-size: 13px;
  font-weight: normal;
  line-height: 15px;
}
.goods {
  width: 972px;
  table-layout: fixed;
  border-spacing: 0;
  border-top: 1px dotted #000;
  text-align: center;
}
.goods th,
.goods td {
  box-sizing: border-box;
  padding: 0;
  font-weight: normal;
  white-space: pre;
  border-right: 1px dotted #000;
  border-bottom: 1px dotted #000;
  line-height: 14px;
}
.heads {
  height: 56px;
}
.heads th {
  overflow: hidden;
}
.numbers {
  height: 15px;
}
.goods .numbers th {
  line-height: 13px;
  border-bottom: 2px solid #000;
}
.item {
  height: 27px;
}
.goods .item td {
  vertical-align: top;
  line-height: 13px;
}
.total {
  height: 14px;
}
.total:last-child {
  height: 15px;
}
.goods .total td {
  line-height: 13px;
}
.goods td.left {
  text-align: left;
  padding-left: 2px;
}
.goods td.right {
  text-align: right;
  padding-right: 2px;
}
.goods .total td:first-child {
  border-bottom: 0;
}
.goods .total:last-child td:first-child {
  padding-right: 8px;
}
.summary {
  height: 106px;
}
.summary-text {
  width: 696px;
}
.weights {
  width: 563px;
}
.weight-box {
  box-sizing: border-box;
  width: 72px;
  height: 42px;
  border: 2px solid #000;
}
.weight-box div:first-child {
  height: 18px;
  border-bottom: 1px solid #000;
}
.markup {
  width: 130px;
  height: 112px;
  margin-top: -1px;
  box-sizing: border-box;
  table-layout: fixed;
  border-spacing: 0;
  border: 2px solid #000;
}
.markup th,
.markup td {
  padding: 0 2px 0 1px;
  font-weight: normal;
  text-align: left;
  border-bottom: 1px dotted #000;
}
.markup th {
  border-right: 1px dotted #000;
}
.markup td {
  text-align: right;
}
.m1 {
  height: 19px;
}
.m2 {
  height: 55px;
}
.m1 th {
  vertical-align: bottom;
  line-height: 12px;
}
.m2 th {
  line-height: 13px;
}
.markup .m3 th,
.markup .m3 td {
  border-bottom: 0;
}
.signatures {
  height: 155px;
}
.release {
  width: 507px;
}
.acceptance {
  margin-top: 3px;
  border-left: 1px dotted #000;
}
.page-break {
  height: 1px;
  background: repeating-linear-gradient(90deg, #000 0 6px, #fff 6px 8px);
}
.transport {
  width: 887px;
}
.way-codes {
  box-sizing: border-box;
  width: 86px;
  margin-top: 16px;
  border: 2px solid #000;
}
.way-codes div {
  box-sizing: border-box;
  height: 22px;
  padding-left: 1px;
  line-height: 28px;
  border-bottom: 2px solid #000;
}
.way-codes .rest {
  height: auto;
  border: 0;
}
.toolbar.bottom {
  height: 31px;
}
.windows {
  flex: none;
  display: flex;
  gap: 3px;
  height: 20px;
  padding: 3px 2px;
  margin-top: 1px;
  border-top: 1px solid #fff;
  border-bottom: 1px solid #848284;
}
.windows button {
  box-sizing: border-box;
  flex: 0 1 209px;
  display: flex;
  align-items: center;
  padding: 0 2px;
  border: 1px solid;
  border-color: #fff #404040 #404040 #fff;
  box-shadow: inset -1px -1px #848284;
  white-space: pre;
}
.windows button.active {
  font-weight: bold;
  border-color: #404040 #fff #fff #404040;
  box-shadow: inset 1px 1px #848284;
}
.status {
  flex: none;
  box-sizing: border-box;
  height: 23px;
  display: flex;
  align-items: center;
  gap: 3px;
  border-top: 1px solid #fff;
  padding-left: 2px;
}
.hint {
  flex: 1;
}
.field {
  box-sizing: border-box;
  height: 16px;
  padding-left: 1px;
  border: 1px solid;
  border-color: #848284 #fff #fff #848284;
  white-space: nowrap;
}
.w1 {
  width: 25px;
}
.w2 {
  width: 27px;
}
.w3 {
  width: 150px;
}
</style>
